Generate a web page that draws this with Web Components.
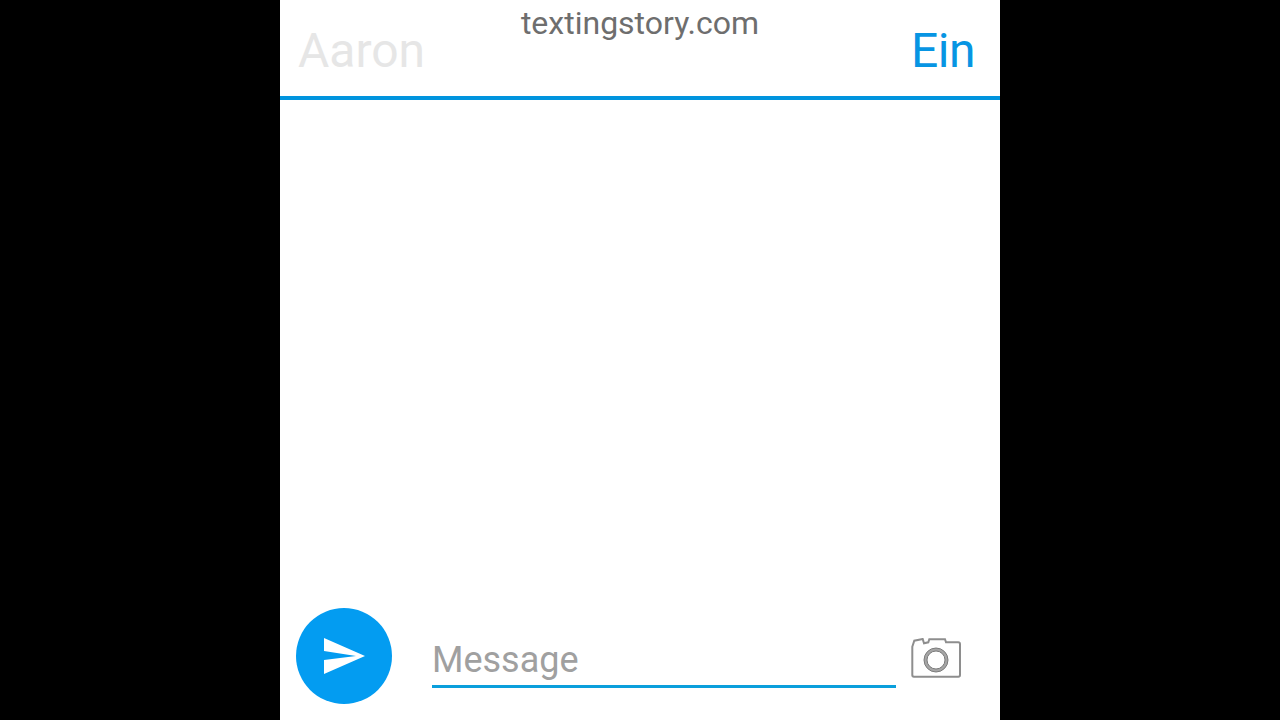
<!DOCTYPE html>
<html>
<head>
<meta charset="utf-8">
<title>textingstory</title>
<style>
    html, body { margin: 0; height: 100%; background: #000; }
    body { display: flex; justify-content: center; font-family: Roboto, "Liberation Sans", sans-serif; }
</style>
</head>
<body>
<chat-screen>
    <chat-header slot="header" name="Aaron" action="Ein"></chat-header>
    <chat-composer slot="composer" placeholder="Message"></chat-composer>
</chat-screen>
<script>
class ChatScreen extends HTMLElement
{
    constructor()
    {
        super();
        const Shadow = this.attachShadow({mode: "open"});
        Shadow.innerHTML = `
        <style>
            :host {
                display: flex;
                flex-direction: column;
                position: relative;
                width: 720px;
                height: 720px;
                background: #fff;
            }
            .Body { flex: 1; }
            .Mark {
                position: absolute;
                top: 5px;
                left: 0;
                right: 0;
                text-align: center;
                font-size: 32px;
                line-height: 37px;
                color: #6e6e6e;
            }
        </style>
        <slot name="header"></slot>
        <div class="Body"></div>
        <slot name="composer"></slot>
        <div class="Mark">textingstory.com</div>
        `;
    }
}

class ChatHeader extends HTMLElement
{
    constructor()
    {
        super();
        const Shadow = this.attachShadow({mode: "open"});
        Shadow.innerHTML = `
        <style>
            :host {
                display: flex;
                justify-content: space-between;
                align-items: center;
                box-sizing: border-box;
                height: 100px;
                padding: 4px 25px 0 18px;
                border-bottom: 4px solid #0094de;
                font-size: 48px;
            }
            .Name { color: #e6e6e6; }
            .Action { color: #0795e3; letter-spacing: -0.5px; }
        </style>
        <span class="Name"></span>
        <span class="Action"></span>
        `;
        Shadow.querySelector(".Name").textContent = this.getAttribute("name");
        Shadow.querySelector(".Action").textContent = this.getAttribute("action");
    }
}

class ChatComposer extends HTMLElement
{
    constructor()
    {
        super();
        const Shadow = this.attachShadow({mode: "open"});
        Shadow.innerHTML = `
        <style>
            :host {
                display: flex;
                align-items: flex-end;
                height: 96px;
                padding: 0 39px 16px 16px;
            }
            .Send {
                width: 96px;
                height: 96px;
                flex: none;
                display: block;
            }
            .Field {
                flex: 1;
                box-sizing: border-box;
                height: 48px;
                margin: 0 15px 16px 40px;
                border-bottom: 3px solid #0a9fdc;
                font-size: 36px;
                line-height: 40px;
                color: #a0a0a0;
            }
            .Camera {
                width: 50px;
                height: 40px;
                flex: none;
                display: block;
                margin-bottom: 26px;
            }
        </style>
        <svg class="Send" viewBox="0 0 96 96">
            <circle cx="48" cy="48" r="48" fill="#039cf1"/>
            <path d="M28 30 L69 48 L28 66 L28 52 L60 48 L28 43 Z" fill="#fff"/>
        </svg>
        <div class="Field"></div>
        <svg class="Camera" viewBox="0 0 50 40" fill="none" stroke="#8e8e8e" stroke-width="2">
            <path d="M1.300 8.700 L3.300 2.700 L11.700 1 L13 5.300 L17.300 4.300 L18.300 1.300 L34 1.300 L35 4.300 L47.300 4.300 Q49 4.300 49 6.300 L49 37 Q49 38.700 47.300 38.700 L3 38.700 Q1.300 38.700 1.300 37 Z"/>
            <circle cx="25" cy="22" r="10.500" stroke="#a6a6a6" stroke-width="3"/>
            <circle cx="25" cy="22" r="12" stroke="#7c7c7c" stroke-width="1"/>
            <circle cx="25" cy="22" r="9" stroke="#7c7c7c" stroke-width="1"/>
        </svg>
        `;
        Shadow.querySelector(".Field").textContent = this.getAttribute("placeholder");
    }
}

customElements.define("chat-screen", ChatScreen);
customElements.define("chat-header", ChatHeader);
customElements.define("chat-composer", ChatComposer);
</script>
</body>
</html>
